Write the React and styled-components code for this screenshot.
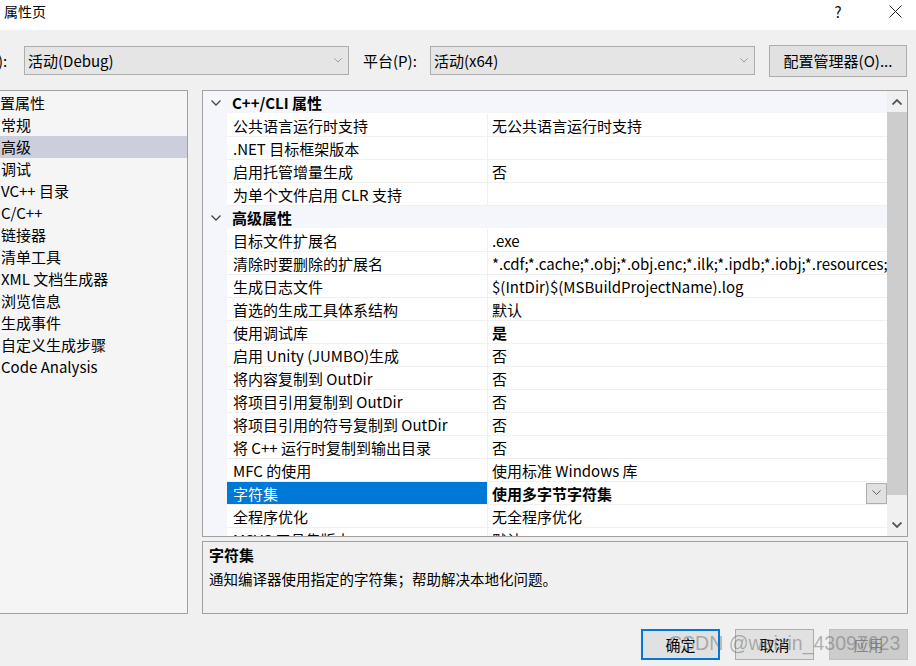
import React from "react";
import styled, { createGlobalStyle, css } from "styled-components";

const Global = createGlobalStyle`
  html, body { margin: 0; padding: 0; background: #f0f0f0; }
  body { font-family: "Noto Sans CJK SC", "Noto Sans", sans-serif; color: #000; }
  * { box-sizing: border-box; }
`;

const Window = styled.div`
  position: relative;
  width: 916px;
  height: 666px;
  overflow: hidden;
  background: #f0f0f0;
  font-size: 15px;
  display: flex;
  flex-direction: column;
`;

const TitleBar = styled.div`
  height: 30px;
  background: #fff;
  display: flex;
  align-items: center;
  padding-left: 4px;
  font-size: 14px;
`;

const Title = styled.div`
  flex: 1;
  margin-top: -9px;
`;

const TitleBtn = styled.div`
  width: ${(p) => p.$w}px;
  display: flex;
  justify-content: center;
  align-items: center;
  margin-top: -8px;
  font-size: 15px;
  color: #111;
`;

const Toolbar = styled.div`
  height: 60px;
  display: flex;
  align-items: center;
  padding-top: 1px;
`;

const Label = styled.div`
  margin-left: ${(p) => p.$ml || 0}px;
  width: ${(p) => p.$w}px;
  white-space: nowrap;
  font-size: 15px;
`;

const Combo = styled.div`
  width: ${(p) => p.$w}px;
  height: 29px;
  background: #e5e5e5;
  border: 1px solid #adadad;
  display: flex;
  align-items: center;
  padding-left: 3px;
  padding-right: 6px;
  margin-left: ${(p) => p.$ml || 0}px;
`;

const ComboText = styled.span`
  flex: 1;
`;

const Button = styled.div`
  height: ${(p) => p.$h || 31}px;
  width: ${(p) => p.$w}px;
  margin-left: ${(p) => p.$ml || 0}px;
  background: #e1e1e1;
  border: 1px solid #adadad;
  display: flex;
  align-items: center;
  justify-content: center;
  font-size: 15px;
  ${(p) =>
    p.$default &&
    css`
      border: 2px solid #0078d7;
    `}
  ${(p) =>
    p.$disabled &&
    css`
      background: #cccccc;
      border-color: #bfbfbf;
      color: #838383;
    `}
`;

const Main = styled.div`
  height: 524px;
  display: flex;
`;

const LeftPanel = styled.div`
  width: 188px;
  height: 524px;
  background: #f5f5f5;
  border: 1px solid #a0a0a0;
  border-left: none;
  padding-top: 1px;
  overflow: hidden;
`;

const TreeItem = styled.div`
  height: 22px;
  line-height: 22px;
  padding-left: ${(p) => p.$indent}px;
  white-space: nowrap;
  background: ${(p) => (p.$selected ? "#cccedb" : "transparent")};
`;

const RootText = styled.span`
  margin-left: -15px;
`;

const RightColumn = styled.div`
  margin-left: 14px;
  width: 706px;
  display: flex;
  flex-direction: column;
  gap: 4px;
`;

const Grid = styled.div`
  height: 447px;
  border: 1px solid #a0a0a0;
  display: flex;
  background: #fff;
`;

const Rows = styled.div`
  flex: 1;
  overflow: hidden;
  background: #f4f6fb;
`;

const Row = styled.div`
  height: 23px;
  display: grid;
  grid-template-columns: 24px 261px 1fr;
  align-items: stretch;
  white-space: nowrap;
`;

const Chevron = styled.div`
  display: flex;
  align-items: center;
  justify-content: center;
  padding-left: 2px;
`;

const CatText = styled.div`
  grid-column: 2 / span 2;
  font-weight: bold;
  display: flex;
  align-items: center;
  padding-left: 5px;
  background: #f4f6fb;
  border-bottom: 1px solid #fff;
`;

const Cell = styled.div`
  display: flex;
  align-items: center;
  padding-left: ${(p) => p.$pl}px;
  background: #fff;
  border-bottom: 1px solid #f0f0f0;
  overflow: hidden;
  ${(p) =>
    p.$divider &&
    css`
      border-right: 1px solid #f0f0f0;
    `}
  ${(p) =>
    p.$sel &&
    css`
      background: #0078d7;
      color: #fff;
    `}
  ${(p) =>
    p.$bold &&
    css`
      font-weight: bold;
    `}
`;

const ValText = styled.span`
  flex: 1;
  overflow: hidden;
`;

const DropBtn = styled.div`
  width: 21px;
  height: 21px;
  background: #e1e1e1;
  border: 1px solid #adadad;
  display: flex;
  align-items: center;
  justify-content: center;
  font-weight: normal;
`;

const ScrollBar = styled.div`
  width: 20px;
  background: #f0f0f0;
  display: flex;
  flex-direction: column;
`;

const ScrollArrow = styled.div`
  height: ${(p) => p.$h}px;
  display: flex;
  align-items: center;
  justify-content: center;
`;

const Thumb = styled.div`
  height: 383px;
  background: #cdcdcd;
`;

const ScrollSpace = styled.div`
  flex: 1;
`;

const Desc = styled.div`
  height: 74px;
  border: 1px solid #a0a0a0;
  background: #f0f0f0;
  padding: 1px 6px;
`;

const DescTitle = styled.div`
  font-weight: bold;
  height: 24px;
  line-height: 24px;
`;

const DescText = styled.div`
  height: 23px;
  line-height: 23px;
  font-size: 14.5px;
`;

const Footer = styled.div`
  flex: 1;
  display: flex;
  align-items: flex-start;
  padding-top: 15px;
  padding-left: 641px;
`;

const Watermark = styled.div`
  position: absolute;
  left: 668px;
  top: 632px;
  font-family: "Liberation Sans", Arial, sans-serif;
  font-size: 19.5px;
  color: rgba(110, 110, 110, 0.5);
  white-space: nowrap;
  pointer-events: none;
`;

const Chev = ({ dir = "down", size = 10, color = "#555", sw = 1 }) => (
  <svg width={size} height={size * 0.6} viewBox="0 0 10 6">
    {dir === "down" ? (
      <polyline points="0.5,0.5 5,5 9.5,0.5" fill="none" stroke={color} strokeWidth={sw} />
    ) : (
      <polyline points="0.5,5.5 5,1 9.5,5.5" fill="none" stroke={color} strokeWidth={sw} />
    )}
  </svg>
);

const tree = [
  { t: "配置属性", i: 0, root: true },
  { t: "常规", i: 1 },
  { t: "高级", i: 1, sel: true },
  { t: "调试", i: 1 },
  { t: "VC++ 目录", i: 1 },
  { t: "C/C++", i: 1 },
  { t: "链接器", i: 1 },
  { t: "清单工具", i: 1 },
  { t: "XML 文档生成器", i: 1 },
  { t: "浏览信息", i: 1 },
  { t: "生成事件", i: 1 },
  { t: "自定义生成步骤", i: 1 },
  { t: "Code Analysis", i: 1 },
];

const rows = [
  { cat: "C++/CLI 属性" },
  { n: "公共语言运行时支持", v: "无公共语言运行时支持" },
  { n: ".NET 目标框架版本", v: "" },
  { n: "启用托管增量生成", v: "否" },
  { n: "为单个文件启用 CLR 支持", v: "" },
  { cat: "高级属性" },
  { n: "目标文件扩展名", v: ".exe" },
  { n: "清除时要删除的扩展名", v: "*.cdf;*.cache;*.obj;*.obj.enc;*.ilk;*.ipdb;*.iobj;*.resources;*.tlb;*.tli;*.tlh;*.tmp" },
  { n: "生成日志文件", v: "$(IntDir)$(MSBuildProjectName).log" },
  { n: "首选的生成工具体系结构", v: "默认" },
  { n: "使用调试库", v: "是", bold: true },
  { n: "启用 Unity (JUMBO)生成", v: "否" },
  { n: "将内容复制到 OutDir", v: "否" },
  { n: "将项目引用复制到 OutDir", v: "否" },
  { n: "将项目引用的符号复制到 OutDir", v: "否" },
  { n: "将 C++ 运行时复制到输出目录", v: "否" },
  { n: "MFC 的使用", v: "使用标准 Windows 库" },
  { n: "字符集", v: "使用多字节字符集", sel: true, bold: true },
  { n: "全程序优化", v: "无全程序优化" },
  { n: "MSVC 工具集版本", v: "默认" },
];

export default function App() {
  return (
    <>
      <Global />
      <Window>
        <TitleBar>
          <Title>属性页</Title>
          <TitleBtn $w={14}>?</TitleBtn>
          <TitleBtn $w={42} style={{ marginLeft: 29 }}>
            <svg width="13" height="13" viewBox="0 0 13 13">
              <path d="M0.5 0.5 L12.5 12.5 M12.5 0.5 L0.5 12.5" stroke="#222" strokeWidth="1" />
            </svg>
          </TitleBtn>
        </TitleBar>
        <Toolbar>
          <Label $w={26} $ml={-2}>):</Label>
          <Combo $w={325}>
            <ComboText>活动(Debug)</ComboText>
            <Chev size={8} color="#888" />
          </Combo>
          <Label $w={67} $ml={14}>平台(P):</Label>
          <Combo $w={325}>
            <ComboText>活动(x64)</ComboText>
            <Chev size={8} color="#888" />
          </Combo>
          <Button $w={138} $ml={14} $h={32}>配置管理器(O)...</Button>
        </Toolbar>
        <Main>
          <LeftPanel>
            {tree.map((it, k) => (
              <TreeItem key={k} $indent={it.root ? 0 : it.i} $selected={it.sel}>
                {it.root ? <RootText>{it.t}</RootText> : it.t}
              </TreeItem>
            ))}
          </LeftPanel>
          <RightColumn>
            <Grid>
              <Rows>
                {rows.map((r, k) =>
                  r.cat ? (
                    <Row key={k}>
                      <Chevron>
                        <Chev size={10} color="#444" sw={1.3} />
                      </Chevron>
                      <CatText>{r.cat}</CatText>
                    </Row>
                  ) : (
                    <Row key={k}>
                      <div />
                      <Cell $pl={6} $divider $sel={r.sel}>{r.n}</Cell>
                      <Cell $pl={4} $bold={r.bold}>
                        <ValText>{r.v}</ValText>
                        {r.sel && (
                          <DropBtn>
                            <Chev size={9} color="#555" />
                          </DropBtn>
                        )}
                      </Cell>
                    </Row>
                  )
                )}
              </Rows>
              <ScrollBar>
                <ScrollArrow $h={21}>
                  <Chev dir="up" size={10} color="#555" sw={1.8} />
                </ScrollArrow>
                <Thumb />
                <ScrollSpace />
                <ScrollArrow $h={22}>
                  <Chev size={10} color="#555" sw={1.8} />
                </ScrollArrow>
              </ScrollBar>
            </Grid>
            <Desc>
              <DescTitle>字符集</DescTitle>
              <DescText>通知编译器使用指定的字符集；帮助解决本地化问题。</DescText>
            </Desc>
          </RightColumn>
        </Main>
        <Footer>
          <Button $w={79} $h={31} $default>确定</Button>
          <Button $w={79} $h={31} $ml={15}>取消</Button>
          <Button $w={79} $h={31} $ml={15} $disabled>应用</Button>
        </Footer>
        <Watermark>CSDN @weixin_43097623</Watermark>
      </Window>
    </>
  );
}
